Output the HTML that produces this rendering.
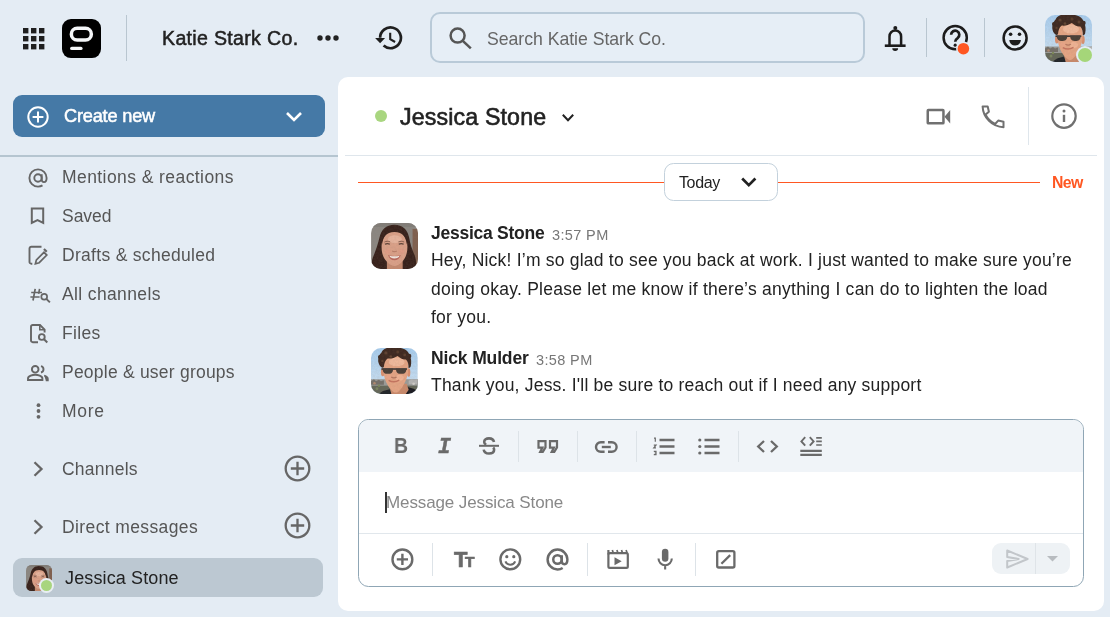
<!DOCTYPE html>
<html lang="en">
<head>
<meta charset="utf-8">
<title>Katie Stark Co.</title>
<style>
*{box-sizing:border-box;margin:0;padding:0}
html,body{width:1110px;height:617px;overflow:hidden}
body{background:#e4ecf4;font-family:"Liberation Sans",Arial,sans-serif;color:#222;position:relative}
.abs{position:absolute}
svg{position:absolute;overflow:visible}
.t{position:absolute;white-space:nowrap;line-height:1;will-change:transform}
/* top bar */
.vdiv{position:absolute;width:1px;background:#b9c6d0}
#search{position:absolute;left:430px;top:12px;width:435px;height:51px;border:2px solid #b9cad8;border-radius:10px;background:#e6eef6}
/* sidebar */
#create{position:absolute;left:13px;top:95.400px;width:312px;height:42px;border-radius:9px;background:#4579a6}
.nav{color:#555;font-size:17.5px}
#selrow{position:absolute;left:13px;top:558.200px;width:309.600px;height:39.200px;border-radius:9px;background:#bcc8d2}
/* main */
#main{position:absolute;left:338.200px;top:77px;width:765.600px;height:533.600px;background:#fff;border-radius:10px}
#hdrline{position:absolute;left:345px;top:155px;width:752px;height:1px;background:#dfe6ec}
#sideline{position:absolute;left:0;top:155.200px;width:338px;height:1.500px;background:#b5c5d0}
#today{position:absolute;left:663.700px;top:162.800px;width:114.500px;height:38.600px;border:1.500px solid #c3d1dc;border-radius:9.500px;background:#fff}
#compose{position:absolute;left:357.800px;top:419.200px;width:726.200px;height:167.400px;border:1.400px solid #8fa6b5;border-radius:10.500px;background:#fff;overflow:hidden}
#ctool{position:absolute;left:0;top:0;width:100%;height:52.300px;background:#f0f4f8}
#cline{position:absolute;left:0;top:113px;width:100%;height:1px;background:#e1e7ec}
.msg{font-size:17.5px;color:#222}
.cdiv{position:absolute;width:1px;background:#dde3e8}
</style>
</head>
<body>

<!-- ===== TOP BAR ===== -->
<div id="topbar">
  <svg style="left:23px;top:27.800px" width="21.400" height="21.400" viewBox="0 0 21.400 21.400" fill="#1f1f1f">
    <rect x="0" y="0" width="5.400" height="5.400"/><rect x="8" y="0" width="5.400" height="5.400"/><rect x="16" y="0" width="5.400" height="5.400"/>
    <rect x="0" y="8" width="5.400" height="5.400"/><rect x="8" y="8" width="5.400" height="5.400"/><rect x="16" y="8" width="5.400" height="5.400"/>
    <rect x="0" y="16" width="5.400" height="5.400"/><rect x="8" y="16" width="5.400" height="5.400"/><rect x="16" y="16" width="5.400" height="5.400"/>
  </svg>
  <svg style="left:62.400px;top:18.500px" width="40" height="40" viewBox="0 0 40 40">
    <rect x="0" y="0" width="39" height="39.100" rx="9" fill="#000"/>
    <rect x="9.350" y="9.350" width="20" height="11.700" rx="5.850" fill="none" stroke="#f4f6f8" stroke-width="3.500"/>
    <rect x="8.100" y="27.700" width="12.500" height="3.400" rx="1.700" fill="#f4f6f8"/>
  </svg>
  <div class="vdiv" style="left:126px;top:15px;height:46px"></div>
  <div class="t" id="ws" style="left:162px;top:28.5px;font-size:19.600px;color:#222;font-weight:normal;-webkit-text-stroke:0.500px #222;letter-spacing:0.308px">Katie Stark Co.</div>
  <svg style="left:317px;top:35px" width="22" height="6" viewBox="0 0 22 6" fill="#222"><circle cx="3" cy="3" r="2.700"/><circle cx="11" cy="3" r="2.700"/><circle cx="19" cy="3" r="2.700"/></svg>
  <!-- history -->
  <svg id="hist" style="left:375px;top:24px" width="28" height="27" viewBox="0 0 28 27" fill="none" stroke="#1f1f1f" stroke-width="2.700">
    <path d="M5.100 13.850A10.400 10.400 0 1 1 8.570 21.600"/>
    <path d="M0.100 13.900h10l-5 5.300z" fill="#1f1f1f" stroke="none"/>
    <path d="M15.200 8.800v6.300l4.900 2.900" stroke-width="2.100"/>
  </svg>
  <div id="search"></div>
  <svg style="left:449px;top:27px" width="23" height="22" viewBox="0 0 23 22" fill="none" stroke="#555" stroke-width="2.5"><circle cx="8.6" cy="8.6" r="7"/><path d="M13.8 13.8l8 7.6"/></svg>
  <div class="t" id="stext" style="left:487px;top:30.5px;font-size:17.7px;color:#666;letter-spacing:-0.042px">Search Katie Stark Co.</div>
  <!-- bell -->
  <svg id="bell" style="left:885px;top:25px" width="22" height="26" viewBox="0 0 22 26" fill="none" stroke="#1c1c1c" stroke-width="2.5">
    <path d="M4.500 20.300V11.400a5.800 6 0 0 1 11.600 0v8.900"/>
    <path d="M-0.200 20.700h20.800" stroke-width="2.600"/>
    <circle cx="10.300" cy="2.900" r="2" fill="#1c1c1c" stroke="none"/>
    <path d="M7.300 23.300h5.800a2.900 2.600 0 0 1-5.800 0z" fill="#1c1c1c" stroke="none"/>
  </svg>
  <div class="vdiv" style="left:926px;top:18px;height:39px"></div>
  <!-- help -->
  <svg id="help" style="left:942px;top:24px" width="28" height="32" viewBox="0 0 28 32" fill="none" stroke="#1c1c1c" stroke-width="2.500">
    <circle cx="13.200" cy="13.700" r="11.600"/>
    <path d="M9.100 10.700a4.100 4.100 0 1 1 6.500 3.400c-1.600 1.100-2.400 1.900-2.400 3.700" stroke-width="2.700"/>
    <circle cx="13.200" cy="21.200" r="1.600" fill="#1c1c1c" stroke="none"/>
    <circle cx="21.400" cy="24.700" r="7.300" fill="#e4ecf4" stroke="none"/>
    <circle cx="21.400" cy="24.700" r="5.800" fill="#ff5722" stroke="none"/>
  </svg>
  <div class="vdiv" style="left:984px;top:18px;height:39px"></div>
  <!-- smiley -->
  <svg id="smile" style="left:1002px;top:24px" width="27" height="27" viewBox="0 0 27 27" fill="none" stroke="#1c1c1c" stroke-width="2.500">
    <circle cx="13.100" cy="13.900" r="11.500"/>
    <circle cx="8.600" cy="10.300" r="1.800" fill="#1c1c1c" stroke="none"/>
    <circle cx="17.500" cy="10.300" r="1.800" fill="#1c1c1c" stroke="none"/>
    <path d="M7.300 16.100h11.600a5.800 5.400 0 0 1-11.600 0z" fill="#1c1c1c" stroke="none"/>
  </svg>
  <!-- user avatar placeholder -->
  <!--uav--><svg class="av" viewBox="0 0 47 47" width="47" height="47" style="left:1045px;top:14.6px;border-radius:10px;overflow:hidden">
  <defs>
    <linearGradient id="skyu" x1="0" y1="0" x2="0" y2="1"><stop offset="0" stop-color="#a6cbec"/><stop offset="0.7" stop-color="#c4dbef"/></linearGradient>
    <filter id="blu" x="-10%" y="-10%" width="120%" height="120%"><feGaussianBlur stdDeviation="0.6"/></filter>
    <filter id="nzu" x="0" y="0" width="100%" height="100%"><feTurbulence type="fractalNoise" baseFrequency="0.45" numOctaves="2" seed="7" result="n"/><feColorMatrix in="n" type="matrix" values="0 0 0 0 0.25  0 0 0 0 0.18  0 0 0 0 0.12  1.4 0 0 0 -0.45"/></filter>
  </defs>
  <rect width="47" height="47" fill="url(#skyu)"/>
  <g filter="url(#blu)">
    <!-- landscape -->
    <rect x="-2" y="31.500" width="51" height="8" fill="#9a9b98"/>
    <rect x="-2" y="38" width="51" height="12" fill="#65675a"/>
    <path d="M0 33.500l3-2 2 2 3-1.500 2 1.500 3-1v4.500h-13z" fill="#74706a"/>
    <path d="M38 33l3-1.500 3 1 3-1v5h-9z" fill="#b4b3b2"/>
    <circle cx="3.500" cy="35.500" r="1.300" fill="#b08a70"/><circle cx="8" cy="38" r="1.200" fill="#7c8a5a"/><circle cx="43" cy="36" r="1.300" fill="#d4d2ce"/><circle cx="6" cy="41" r="1.500" fill="#7a8560"/>
    <!-- shirt -->
    <path d="M30 41l6-2 7 2 5 3v4h-20z" fill="#1d1d20"/>
    <path d="M7 47l5-3.500 7-2 2 6z" fill="#24252a"/>
    <!-- neck -->
    <path d="M18 36h18l2 6-4 6h-13z" fill="#c98a6c"/>
    <!-- ears -->
    <ellipse cx="11.800" cy="24.500" rx="1.800" ry="4" fill="#d99070"/>
    <ellipse cx="38" cy="24.800" rx="1.700" ry="4.300" fill="#d99070"/>
    <!-- face -->
    <path d="M12.300 18c0-8 5-11.500 12.800-11.500s12.700 3.500 12.700 11.500c0 6-.8 11-3.300 16-2.500 5-6 11-9.400 11s-7.400-5.500-9.800-10.500c-2.200-4.500-3-10-3-16.500z" fill="#e3a484"/>
    <ellipse cx="26" cy="14" rx="8" ry="4.500" fill="#efb99c"/>
    <ellipse cx="29" cy="30" rx="4" ry="3" fill="#eeb294"/>
    <ellipse cx="18" cy="29.500" rx="3" ry="2.600" fill="#e8a588"/>
    <!-- hair -->
    <path d="M7.600 15c-1-4 .5-8 3-10.500 1-3 5-5 8-4.800 3-.9 8-.9 11 .3 4 .3 8 3 9 6.500 2 3 2.500 8 1.500 12-.6 1.500-1.500 2-2.300 1.500.3-3-.5-6.500-2.500-8.500-3 .5-6-1.500-8.500-3.500-3 2-7 3-10 2.500-2.500 1.500-3.500 5-3.800 8.500-.6 1-1.600 1.200-2.600.5-1.400-1.200-2.300-2.500-2.800-4.500z" fill="#3f2c22"/>
    <circle cx="9" cy="9" r="2" fill="#3f2c22"/><circle cx="38.500" cy="8" r="2.200" fill="#3f2c22"/><circle cx="24" cy="1.500" r="3" fill="#3f2c22"/>
    <circle cx="15" cy="5" r="1.600" fill="#5e4030"/><circle cx="27" cy="4" r="1.500" fill="#5a3d2e"/><circle cx="34" cy="7" r="1.400" fill="#5e4030"/><circle cx="20" cy="8.500" r="1.300" fill="#654636"/><circle cx="11.500" cy="13" r="1.200" fill="#5a3d2e"/>
    <!-- sunglasses -->
    <path d="M10.500 20.400h25.800v1.600h-25.800z" fill="#3a3634"/>
    <path d="M11.800 20.600h10.400c.3 3-.8 5.400-4.400 5.400h-1.800c-3 0-4.400-2.400-4.200-5.400z" fill="#4c3f39"/>
    <path d="M25.200 20.600h10.400c.3 3-1 5.400-4.200 5.400h-1.800c-3.400 0-4.600-2.400-4.400-5.400z" fill="#4c3f39"/>
    <!-- nose + mouth -->
    <path d="M20.400 29.200c1.500 1 4 1 5.400 0" stroke="#b47860" stroke-width="1.300" fill="none"/>
    <path d="M17.800 32.600c3 1.700 7.500 1.700 10.700-.2" stroke="#c47460" stroke-width="1.400" fill="none"/>
  </g>
  <rect width="47" height="47" filter="url(#nzu)" opacity="0.130"/>
</svg>
<!--/uav-->
  <div class="abs" style="left:1076px;top:46px;width:18px;height:18px;border-radius:50%;background:#e4ecf4"></div>
  <div class="abs" style="left:1078px;top:48px;width:14px;height:14px;border-radius:50%;background:#a5d679"></div>
</div>

<!-- ===== SIDEBAR ===== -->
<div id="sidebar">
  <div id="create"></div>
  <svg style="left:27px;top:105.5px" width="22" height="22" viewBox="0 0 22 22" fill="none" stroke="#fff" stroke-width="2"><circle cx="11" cy="11" r="9.7"/><path d="M11 5.6v10.8M5.6 11h10.8"/></svg>
  <div class="t" id="cn" style="left:64px;top:107.1px;font-size:18.2px;color:#fff;font-weight:normal;-webkit-text-stroke:0.500px #fff;letter-spacing:-0.202px">Create new</div>
  <svg style="left:286px;top:112px" width="16" height="10" viewBox="0 0 16 10" fill="none" stroke="#fff" stroke-width="2.6"><path d="M1 1l7 7 7-7"/></svg>
  <div id="sideline"></div>
  <!-- nav icons -->
  <!-- mentions @ -->
  <svg id="i-at" style="left:28px;top:167.5px" width="20" height="20" viewBox="0 0 20 20" fill="none" stroke="#666" stroke-width="1.9">
    <circle cx="10" cy="10" r="3.7"/>
    <path d="M13.7 6.2v5.4c0 1.6 1 2.5 2.3 2.5 1.5 0 2.6-1.4 2.6-4.1a8.6 8.6 0 1 0-8.6 8.6c1.600 0 3.200-.4 4.500-1.200"/>
  </svg>
  <!-- saved bookmark -->
  <svg id="i-bm" style="left:30px;top:207px" width="15" height="18" viewBox="0 0 15 18" fill="none" stroke="#666" stroke-width="2"><path d="M1.800 1.400h11.400v14.600l-5.700-2.800-5.700 2.800z"/></svg>
  <!-- drafts -->
  <svg id="i-dr" style="left:28px;top:245px" width="20" height="21" viewBox="0 0 20 21" fill="none" stroke="#666" stroke-width="1.900">
    <path d="M13.500 1.700h-10.200a1.800 1.800 0 0 0-1.800 1.800v13.400a1.800 1.800 0 0 0 1.800 1.800h1"/>
    <path d="M7.400 18.700l1-3.800 7.600-7.600 2.800 2.800-7.600 7.600z" stroke-width="1.700"/>
    <path d="M15.200 4.800l1.500-1.500 2.800 2.800-1.500 1.500z" fill="#666" stroke="none"/>
  </svg>
  <!-- all channels #q -->
  <svg id="i-ch" style="left:30px;top:288px" width="21" height="15" viewBox="0 0 21 15" fill="none" stroke="#666" stroke-width="1.700">
    <path d="M1.200 4.500h10.800M0.400 9h9.200M5.200 0.800l-2.200 11.700M9.600 0.800l-1 5"/>
    <circle cx="14.200" cy="8.700" r="2.900"/>
    <path d="M16.300 10.900l3.600 3.500" stroke-width="2"/>
  </svg>
  <!-- files -->
  <svg id="i-fi" style="left:30px;top:323.500px" width="19" height="20" viewBox="0 0 19 20" fill="none" stroke="#666" stroke-width="1.900">
    <path d="M8 18.200h-5.300a1.700 1.700 0 0 1-1.700-1.700v-13.800a1.700 1.700 0 0 1 1.700-1.700h7.300l4.600 4.600v2.800"/>
    <path d="M9.800 1.300v4.500h4.500" stroke-width="1.600"/>
    <circle cx="11.800" cy="13" r="2.900"/>
    <path d="M14 15.200l3.300 3.300" stroke-width="2"/>
  </svg>
  <!-- people -->
  <svg id="i-pe" style="left:27px;top:364.500px" width="22" height="16" viewBox="0 0 22 16" fill="none" stroke="#666" stroke-width="1.900">
    <circle cx="8.200" cy="4.300" r="3.300"/>
    <path d="M1 15v-1.500c0-2.600 4.800-3.700 7.200-3.700s7.200 1.100 7.200 3.700v1.500z"/>
    <path d="M14 1.100a3.300 3.300 0 0 1 0 6.400" />
    <path d="M17.200 10.500c2 .7 3.800 1.800 3.800 3.300v1.800h-2.200" fill="#666" stroke-width="1.400"/>
  </svg>
  <!-- more -->
  <svg id="i-mo" style="left:35.500px;top:403px" width="5" height="16" viewBox="0 0 5 16" fill="#666"><circle cx="2.500" cy="2.200" r="1.900"/><circle cx="2.500" cy="8" r="1.900"/><circle cx="2.500" cy="13.800" r="1.900"/></svg>

  <div class="t nav" id="n1" style="left:62px;top:169px;letter-spacing:0.424px">Mentions &amp; reactions</div>
  <div class="t nav" id="n2" style="left:62px;top:208px;letter-spacing:-0.045px">Saved</div>
  <div class="t nav" id="n3" style="left:62px;top:247px;letter-spacing:0.302px">Drafts &amp; scheduled</div>
  <div class="t nav" id="n4" style="left:62px;top:286px;letter-spacing:0.369px">All channels</div>
  <div class="t nav" id="n5" style="left:62px;top:325px;letter-spacing:0.309px">Files</div>
  <div class="t nav" id="n6" style="left:62px;top:364px;letter-spacing:0.224px">People &amp; user groups</div>
  <div class="t nav" id="n7" style="left:62px;top:403px;letter-spacing:0.681px">More</div>

  <!-- sections -->
  <svg style="left:33px;top:461px" width="11" height="16" viewBox="0 0 11 16" fill="none" stroke="#666" stroke-width="2.300"><path d="M1.500 1.200l7 6.800-7 6.800"/></svg>
  <div class="t nav" id="nc" style="left:62px;top:461px;letter-spacing:0.231px">Channels</div>
  <svg style="left:283.900px;top:454.800px" width="27" height="27" viewBox="0 0 27 27" fill="none" stroke="#666" stroke-width="2.300"><circle cx="13.500" cy="13.500" r="11.800"/><path d="M13.500 6.800v13.400M6.800 13.500h13.400"/></svg>
  <svg style="left:33px;top:518.500px" width="11" height="16" viewBox="0 0 11 16" fill="none" stroke="#666" stroke-width="2.300"><path d="M1.500 1.200l7 6.800-7 6.800"/></svg>
  <div class="t nav" id="nd" style="left:62px;top:518.5px;letter-spacing:0.385px">Direct messages</div>
  <svg style="left:283.900px;top:512.400px" width="27" height="27" viewBox="0 0 27 27" fill="none" stroke="#666" stroke-width="2.300"><circle cx="13.500" cy="13.500" r="11.800"/><path d="M13.500 6.800v13.400M6.800 13.500h13.400"/></svg>

  <div id="selrow"></div>
  <!--javs--><svg class="av" viewBox="0 0 47 47" width="26" height="26" style="left:26px;top:565px;border-radius:5.5px;overflow:hidden">
  <defs>
    <filter id="bls" x="-10%" y="-10%" width="120%" height="120%"><feGaussianBlur stdDeviation="0.65"/></filter>
    <filter id="nzs" x="0" y="0" width="100%" height="100%"><feTurbulence type="fractalNoise" baseFrequency="0.5" numOctaves="2" seed="3" result="n"/><feColorMatrix in="n" type="matrix" values="0 0 0 0 0.3  0 0 0 0 0.2  0 0 0 0 0.15  1.4 0 0 0 -0.45"/></filter>
  </defs>
  <rect width="47" height="47" fill="#8b8782"/>
  <g filter="url(#bls)">
    <rect x="42" y="6" width="7" height="43" fill="#7f6050"/>
    <rect x="-2" y="-2" width="51" height="6" fill="#827e79"/>
    <!-- hair -->
    <path d="M23.500 1.800c8.500 0 13.500 5 15 13 1.200 7 3 12 5.500 17.500 1.500 4 2 9 1.500 15h-44.500c-1.500-6 0-11 2-15.500 2.500-6 4-11 5.500-17 1.800-8 6.500-13 15-13z" fill="#38241d"/>
    <!-- neck -->
    <path d="M16 38h16v10h-16z" fill="#c48a70"/>
    <!-- face -->
    <path d="M10.600 24c0-9 4.900-14.800 13.100-14.800s13.100 5.800 13.100 14.800c0 6-1.500 10.500-4.300 14-2.700 3.500-5.800 5.500-8.800 5.500s-6.100-2-8.800-5.500c-2.800-3.500-4.300-8-4.300-14z" fill="#d9a088"/>
    <ellipse cx="24" cy="16.500" rx="7" ry="4" fill="#e5b39d"/>
    <ellipse cx="17" cy="29" rx="3" ry="2.600" fill="#de9c86"/>
    <ellipse cx="30.500" cy="29" rx="3" ry="2.600" fill="#de9c86"/>
    <!-- hair parting sides -->
    <path d="M23.500 6c-6 1-11 6-12.500 16-.8-7 1-14 6.500-17.500z" fill="#38241d"/>
    <path d="M23.500 6c6 1 11.500 6 12.800 16 .8-7-1-14-6.500-17.500z" fill="#38241d"/>
    <!-- eyes/brows -->
    <path d="M14 21.600c1.500-.9 3.500-.9 5 0M28 21.600c1.500-.9 3.500-.9 5 0" stroke="#5a4036" stroke-width="1.300" fill="none"/>
    <path d="M13.500 19.300c1.700-1 4-1 5.800-.2M27.700 19.100c1.800-.8 4-.8 5.800.2" stroke="#7a5546" stroke-width="0.900" fill="none"/>
    <!-- nose -->
    <path d="M21.300 28.400c1.500.8 3.400.8 4.800 0" stroke="#b97f6a" stroke-width="1.200" fill="none"/>
    <!-- smile -->
    <path d="M17.100 32.500c4 1.200 9 1.200 13 0-1 3.600-3.600 5.300-6.500 5.300s-5.500-1.700-6.500-5.300z" fill="#b9685c"/>
    <path d="M18.500 33.200c3.400.8 7 .8 10.300 0-.6 1.800-2.600 2.800-5.100 2.800s-4.500-1-5.200-2.800z" fill="#f1e6de"/>
  </g>
  <rect width="47" height="47" filter="url(#nzs)" opacity="0.160"/>
</svg>
<!--/javs-->
  <div class="abs" style="left:38.900px;top:577.800px;width:15.200px;height:15.200px;border-radius:50%;background:#e9eef3"></div>
  <div class="abs" style="left:40.700px;top:579.600px;width:11.600px;height:11.600px;border-radius:50%;background:#a8d57e"></div>
  <div class="t" id="js-side" style="left:65px;top:568.500px;font-size:18px;color:#222;letter-spacing:0.126px">Jessica Stone</div>
</div>

<!-- ===== MAIN ===== -->
<div id="main"></div>
<div id="hdrline"></div>
<!-- header -->
<div class="abs" style="left:375.200px;top:110.400px;width:12px;height:12px;border-radius:50%;background:#a9d680"></div>
<div class="t" id="hname" style="left:400px;top:106px;font-size:23.200px;color:#222;-webkit-text-stroke:0.600px #222;letter-spacing:0.142px">Jessica Stone</div>
<svg style="left:561.500px;top:114px" width="12" height="8" viewBox="0 0 12 8" fill="none" stroke="#222" stroke-width="2"><path d="M0.800 0.800l5.200 5.400 5.200-5.400"/></svg>
<!-- video -->
<svg id="i-vid" style="left:926px;top:108.500px" width="25" height="16" viewBox="0 0 25 16" fill="none" stroke="#707070" stroke-width="2.500">
  <rect x="1.750" y="1.050" width="15.700" height="13.200" rx="0.600"/>
  <path d="M18.500 7.700l5.700-6.800v13.700z" fill="#707070" stroke="none"/>
</svg>
<!-- phone -->
<svg id="i-ph" style="left:981px;top:104.500px" width="24" height="24" viewBox="0 0 24 24" fill="none" stroke="#707070" stroke-width="2" stroke-linejoin="round">
  <path d="M1.600 1.500h5.100l1.200 5.200-3.300 2.900c1.900 3.800 5.200 7.200 9.500 9.400l3.100-3.400 5.300 1.100v5.500c-11.400-.4-20.400-9.500-20.900-20.700z"/>
</svg>
<div class="abs" style="left:1028px;top:87px;width:1px;height:58px;background:#dfe6ec"></div>
<!-- info -->
<svg id="i-info" style="left:1051.200px;top:103px" width="26" height="26" viewBox="0 0 26 26" fill="none" stroke="#707070" stroke-width="2.200">
  <circle cx="13" cy="13.100" r="11.700"/>
  <path d="M13 11.800v7.200" stroke-width="2.400"/>
  <circle cx="13" cy="8" r="1.500" fill="#707070" stroke="none"/>
</svg>

<!-- date separator -->
<div class="abs" style="left:358px;top:181.600px;width:682px;height:1.400px;background:#ff5722"></div>
<div id="today"></div>
<div class="t" id="todaytx" style="left:679px;top:174.500px;font-size:16px;color:#222;letter-spacing:-0.381px">Today</div>
<svg style="left:740.700px;top:176.800px" width="16" height="11" viewBox="0 0 16 11" fill="none" stroke="#222" stroke-width="2.700"><path d="M1.200 1.500l6.600 6.600 6.600-6.600"/></svg>
<div class="t" id="newtx" style="left:1052.300px;top:175px;font-size:15.800px;font-weight:bold;color:#ff5722;letter-spacing:-0.595px">New</div>

<!-- message 1 -->
<!--jav--><svg class="av" viewBox="0 0 47 47" width="46.6" height="46.4" style="left:371px;top:222.7px;border-radius:10px;overflow:hidden">
  <defs>
    <filter id="blj" x="-10%" y="-10%" width="120%" height="120%"><feGaussianBlur stdDeviation="0.65"/></filter>
    <filter id="nzj" x="0" y="0" width="100%" height="100%"><feTurbulence type="fractalNoise" baseFrequency="0.5" numOctaves="2" seed="3" result="n"/><feColorMatrix in="n" type="matrix" values="0 0 0 0 0.3  0 0 0 0 0.2  0 0 0 0 0.15  1.4 0 0 0 -0.45"/></filter>
  </defs>
  <rect width="47" height="47" fill="#8b8782"/>
  <g filter="url(#blj)">
    <rect x="42" y="6" width="7" height="43" fill="#7f6050"/>
    <rect x="-2" y="-2" width="51" height="6" fill="#827e79"/>
    <!-- hair -->
    <path d="M23.500 1.800c8.500 0 13.500 5 15 13 1.200 7 3 12 5.500 17.500 1.500 4 2 9 1.500 15h-44.500c-1.500-6 0-11 2-15.500 2.500-6 4-11 5.500-17 1.800-8 6.500-13 15-13z" fill="#38241d"/>
    <!-- neck -->
    <path d="M16 38h16v10h-16z" fill="#c48a70"/>
    <!-- face -->
    <path d="M10.600 24c0-9 4.900-14.800 13.100-14.800s13.100 5.800 13.100 14.800c0 6-1.500 10.500-4.300 14-2.700 3.500-5.800 5.500-8.800 5.500s-6.100-2-8.800-5.500c-2.800-3.500-4.300-8-4.300-14z" fill="#d9a088"/>
    <ellipse cx="24" cy="16.500" rx="7" ry="4" fill="#e5b39d"/>
    <ellipse cx="17" cy="29" rx="3" ry="2.600" fill="#de9c86"/>
    <ellipse cx="30.500" cy="29" rx="3" ry="2.600" fill="#de9c86"/>
    <!-- hair parting sides -->
    <path d="M23.500 6c-6 1-11 6-12.500 16-.8-7 1-14 6.500-17.500z" fill="#38241d"/>
    <path d="M23.500 6c6 1 11.500 6 12.800 16 .8-7-1-14-6.500-17.500z" fill="#38241d"/>
    <!-- eyes/brows -->
    <path d="M14 21.600c1.500-.9 3.500-.9 5 0M28 21.600c1.500-.9 3.500-.9 5 0" stroke="#5a4036" stroke-width="1.300" fill="none"/>
    <path d="M13.500 19.300c1.700-1 4-1 5.800-.2M27.700 19.100c1.800-.8 4-.8 5.800.2" stroke="#7a5546" stroke-width="0.900" fill="none"/>
    <!-- nose -->
    <path d="M21.300 28.400c1.500.8 3.400.8 4.800 0" stroke="#b97f6a" stroke-width="1.200" fill="none"/>
    <!-- smile -->
    <path d="M17.100 32.500c4 1.200 9 1.200 13 0-1 3.600-3.600 5.300-6.500 5.300s-5.500-1.700-6.500-5.300z" fill="#b9685c"/>
    <path d="M18.500 33.200c3.400.8 7 .8 10.300 0-.6 1.800-2.600 2.800-5.100 2.800s-4.500-1-5.200-2.800z" fill="#f1e6de"/>
  </g>
  <rect width="47" height="47" filter="url(#nzj)" opacity="0.160"/>
</svg>
<!--/jav-->
<div class="t" id="m1n" style="left:431px;top:225px;font-size:17.5px;font-weight:bold;color:#222;letter-spacing:-0.256px">Jessica Stone</div>
<div class="t" id="m1t" style="left:552px;top:227.500px;font-size:14.5px;color:#777;letter-spacing:0.371px">3:57 PM</div>
<div class="t msg" id="m1a" style="left:431px;top:252px;letter-spacing:0.22px">Hey, Nick! I’m so glad to see you back at work. I just wanted to make sure you’re</div>
<div class="t msg" id="m1b" style="left:431px;top:280.500px;letter-spacing:0.255px">doing okay. Please let me know if there’s anything I can do to lighten the load</div>
<div class="t msg" id="m1c" style="left:431px;top:309px;letter-spacing:0.253px">for you.</div>

<!-- message 2 -->
<!--nav2--><svg class="av" viewBox="0 0 47 47" width="46.6" height="46.6" style="left:371px;top:347.5px;border-radius:10px;overflow:hidden">
  <defs>
    <linearGradient id="skyn" x1="0" y1="0" x2="0" y2="1"><stop offset="0" stop-color="#a6cbec"/><stop offset="0.7" stop-color="#c4dbef"/></linearGradient>
    <filter id="bln" x="-10%" y="-10%" width="120%" height="120%"><feGaussianBlur stdDeviation="0.6"/></filter>
    <filter id="nzn" x="0" y="0" width="100%" height="100%"><feTurbulence type="fractalNoise" baseFrequency="0.45" numOctaves="2" seed="7" result="n"/><feColorMatrix in="n" type="matrix" values="0 0 0 0 0.25  0 0 0 0 0.18  0 0 0 0 0.12  1.4 0 0 0 -0.45"/></filter>
  </defs>
  <rect width="47" height="47" fill="url(#skyn)"/>
  <g filter="url(#bln)">
    <!-- landscape -->
    <rect x="-2" y="31.500" width="51" height="8" fill="#9a9b98"/>
    <rect x="-2" y="38" width="51" height="12" fill="#65675a"/>
    <path d="M0 33.500l3-2 2 2 3-1.500 2 1.500 3-1v4.500h-13z" fill="#74706a"/>
    <path d="M38 33l3-1.500 3 1 3-1v5h-9z" fill="#b4b3b2"/>
    <circle cx="3.500" cy="35.500" r="1.300" fill="#b08a70"/><circle cx="8" cy="38" r="1.200" fill="#7c8a5a"/><circle cx="43" cy="36" r="1.300" fill="#d4d2ce"/><circle cx="6" cy="41" r="1.500" fill="#7a8560"/>
    <!-- shirt -->
    <path d="M30 41l6-2 7 2 5 3v4h-20z" fill="#1d1d20"/>
    <path d="M7 47l5-3.500 7-2 2 6z" fill="#24252a"/>
    <!-- neck -->
    <path d="M18 36h18l2 6-4 6h-13z" fill="#c98a6c"/>
    <!-- ears -->
    <ellipse cx="11.800" cy="24.500" rx="1.800" ry="4" fill="#d99070"/>
    <ellipse cx="38" cy="24.800" rx="1.700" ry="4.300" fill="#d99070"/>
    <!-- face -->
    <path d="M12.300 18c0-8 5-11.500 12.800-11.500s12.700 3.500 12.700 11.500c0 6-.8 11-3.300 16-2.500 5-6 11-9.400 11s-7.400-5.500-9.800-10.500c-2.200-4.500-3-10-3-16.500z" fill="#e3a484"/>
    <ellipse cx="26" cy="14" rx="8" ry="4.500" fill="#efb99c"/>
    <ellipse cx="29" cy="30" rx="4" ry="3" fill="#eeb294"/>
    <ellipse cx="18" cy="29.500" rx="3" ry="2.600" fill="#e8a588"/>
    <!-- hair -->
    <path d="M7.600 15c-1-4 .5-8 3-10.500 1-3 5-5 8-4.800 3-.9 8-.9 11 .3 4 .3 8 3 9 6.500 2 3 2.500 8 1.500 12-.6 1.500-1.500 2-2.300 1.500.3-3-.5-6.500-2.500-8.500-3 .5-6-1.500-8.500-3.500-3 2-7 3-10 2.500-2.500 1.500-3.500 5-3.800 8.500-.6 1-1.600 1.200-2.600.5-1.400-1.200-2.300-2.500-2.800-4.500z" fill="#3f2c22"/>
    <circle cx="9" cy="9" r="2" fill="#3f2c22"/><circle cx="38.500" cy="8" r="2.200" fill="#3f2c22"/><circle cx="24" cy="1.500" r="3" fill="#3f2c22"/>
    <circle cx="15" cy="5" r="1.600" fill="#5e4030"/><circle cx="27" cy="4" r="1.500" fill="#5a3d2e"/><circle cx="34" cy="7" r="1.400" fill="#5e4030"/><circle cx="20" cy="8.500" r="1.300" fill="#654636"/><circle cx="11.500" cy="13" r="1.200" fill="#5a3d2e"/>
    <!-- sunglasses -->
    <path d="M10.500 20.400h25.800v1.600h-25.800z" fill="#3a3634"/>
    <path d="M11.800 20.600h10.400c.3 3-.8 5.400-4.400 5.400h-1.800c-3 0-4.400-2.400-4.200-5.400z" fill="#4c3f39"/>
    <path d="M25.200 20.600h10.400c.3 3-1 5.400-4.200 5.400h-1.800c-3.400 0-4.600-2.400-4.400-5.400z" fill="#4c3f39"/>
    <!-- nose + mouth -->
    <path d="M20.400 29.200c1.500 1 4 1 5.400 0" stroke="#b47860" stroke-width="1.300" fill="none"/>
    <path d="M17.800 32.600c3 1.700 7.500 1.700 10.700-.2" stroke="#c47460" stroke-width="1.400" fill="none"/>
  </g>
  <rect width="47" height="47" filter="url(#nzn)" opacity="0.130"/>
</svg>
<!--/nav2-->
<div class="t" id="m2n" style="left:431px;top:350.2px;font-size:17.5px;font-weight:bold;color:#222;letter-spacing:-0.137px">Nick Mulder</div>
<div class="t" id="m2t" style="left:536px;top:352.7px;font-size:14.5px;color:#777;letter-spacing:0.371px">3:58 PM</div>
<div class="t msg" id="m2a" style="left:431px;top:377.3px;letter-spacing:0.209px">Thank you, Jess. I'll be sure to reach out if I need any support</div>

<!-- compose -->
<div id="compose">
  <div id="ctool"></div>
  <div id="cline"></div>
</div>
<!-- toolbar top : center y = 446 -->
<div class="t" id="tb-b" style="left:393.800px;top:434.900px;font-size:22.500px;font-weight:bold;color:#6a6a6a;transform:scaleX(0.86);transform-origin:0 0">B</div>
<div class="t" id="tb-i" style="left:438.300px;top:436.700px;-webkit-text-stroke:0.500px #6a6a6a;font-size:21.500px;font-weight:bold;font-style:italic;font-family:'Liberation Mono',monospace;color:#6a6a6a">I</div>
<svg id="tb-s" style="left:479px;top:437px" width="20" height="18" viewBox="0 0 20 18" fill="none" stroke="#6a6a6a" stroke-width="2.600">
  <path d="M15 5c-.4-2.300-2.300-3.600-5-3.600-2.800 0-4.800 1.400-4.800 3.600 0 1.200.7 2.200 2 2.800"/>
  <path d="M4.700 12.600c.4 2.500 2.500 3.900 5.300 3.900 3 0 5.100-1.400 5.100-3.800 0-.9-.3-1.600-.9-2.200"/>
  <path d="M0 8.800h20" stroke-width="2"/>
</svg>
<div class="cdiv" style="left:518px;top:431px;height:31px"></div>
<svg id="tb-q" style="left:537px;top:440px" width="22" height="13" viewBox="0 0 22 13" fill="none" stroke="#6a6a6a" stroke-width="2.200">
  <path d="M1.500 1.200h7v6.200l-2.700 4.500h-2.600l2.200-4.300h-3.900z"/>
  <path d="M13 1.200h7v6.200l-2.700 4.500h-2.600l2.200-4.300h-3.900z"/>
</svg>
<div class="cdiv" style="left:576.500px;top:431px;height:31px"></div>
<svg id="tb-l" style="left:594.500px;top:440.500px" width="23" height="12" viewBox="0 0 23 12" fill="none" stroke="#6a6a6a" stroke-width="2.400">
  <path d="M9.600 1.200h-3.800a4.800 4.800 0 0 0 0 9.600h3.800"/>
  <path d="M13 1.200h3.800a4.800 4.800 0 0 1 0 9.600h-3.800"/>
  <path d="M6.800 6h9"/>
</svg>
<div class="cdiv" style="left:635.500px;top:431px;height:31px"></div>
<svg id="tb-ol" style="left:653px;top:436.500px" width="22" height="19" viewBox="0 0 22 19" fill="none" stroke="#6a6a6a" stroke-width="2.300">
  <path d="M6.500 3h15M6.500 9.500h15M6.500 16h15"/>
  <path d="M1 1.200h1.300v3.600M0.800 8.200h2.200l-2.200 2.700h2.200M0.800 14.400h2.200v3.300h-2.200M1.600 16h1.400" stroke-width="1.200"/>
</svg>
<svg id="tb-ul" style="left:698px;top:437.500px" width="22" height="17" viewBox="0 0 22 17" fill="none" stroke="#6a6a6a" stroke-width="2.300">
  <path d="M6.500 2h15M6.500 8.500h15M6.500 15h15"/>
  <circle cx="1.800" cy="2" r="1.600" fill="#6a6a6a" stroke="none"/><circle cx="1.800" cy="8.500" r="1.600" fill="#6a6a6a" stroke="none"/><circle cx="1.800" cy="15" r="1.600" fill="#6a6a6a" stroke="none"/>
</svg>
<div class="cdiv" style="left:738px;top:431px;height:31px"></div>
<svg id="tb-c" style="left:756px;top:439.500px" width="23" height="13" viewBox="0 0 23 13" fill="none" stroke="#6a6a6a" stroke-width="2.300">
  <path d="M8 1l-5.800 5.500 5.800 5.500M15 1l5.800 5.500-5.800 5.500"/>
</svg>
<svg id="tb-cb" style="left:800px;top:435px" width="22" height="22" viewBox="0 0 22 22" fill="none" stroke="#6a6a6a" stroke-width="2">
  <path d="M5.200 2.200l-3.800 4.200 3.800 4.200M9.800 2.200l3.800 4.200-3.800 4.200" stroke-width="1.900"/>
  <path d="M16.200 2.800h5.600M16.200 6.400h5.600M16.200 10h5.600" stroke-width="1.700"/>
  <path d="M0.300 15.900h21.500M0.300 19.800h21.500" stroke-width="2.200"/>
</svg>

<!-- placeholder -->
<div class="abs" style="left:385px;top:492px;width:1.500px;height:21px;background:#333"></div>
<div class="t" id="ph" style="left:386px;top:493.500px;font-size:17px;color:#888;letter-spacing:-0.112px">Message Jessica Stone</div>

<!-- bottom toolbar : center y = 559 -->
<svg id="bb-plus" style="left:390.500px;top:548px" width="23" height="23" viewBox="0 0 23 23" fill="none" stroke="#6a6a6a" stroke-width="2.400"><circle cx="11.400" cy="11.400" r="9.900"/><path d="M11.400 5.800v11.200M5.800 11.400h11.200"/></svg>
<div class="cdiv" style="left:432px;top:543px;height:33px"></div>
<div class="t" id="bb-tt" style="left:453.600px;top:548.700px;font-size:22px;font-weight:bold;color:#6a6a6a;letter-spacing:-2.400px;-webkit-text-stroke:0.700px #6a6a6a">T<span style="font-size:15.500px">T</span></div>
<svg id="bb-sm" style="left:498.500px;top:548px" width="23" height="23" viewBox="0 0 23 23" fill="none" stroke="#6a6a6a" stroke-width="2.400">
  <circle cx="11.300" cy="11.300" r="9.900"/>
  <circle cx="7.800" cy="8.700" r="1.600" fill="#6a6a6a" stroke="none"/><circle cx="14.800" cy="8.700" r="1.600" fill="#6a6a6a" stroke="none"/>
  <path d="M6.400 13.400a5.300 5.300 0 0 0 9.800 0" stroke-width="2"/>
</svg>
<svg id="bb-at" style="left:545.500px;top:548px" width="23" height="23" viewBox="0 0 20 20" fill="none" stroke="#6a6a6a" stroke-width="2.150">
  <circle cx="10" cy="10" r="3.700"/>
  <path d="M13.700 6.200v5.400c0 1.600 1 2.500 2.300 2.500 1.500 0 2.600-1.400 2.600-4.100a8.600 8.600 0 1 0-8.600 8.600c1.600 0 3.200-.4 4.500-1.200"/>
</svg>
<div class="cdiv" style="left:587px;top:543px;height:33px"></div>
<svg id="bb-cl" style="left:607px;top:548px" width="23" height="23" viewBox="0 0 23 23" fill="none" stroke="#6a6a6a" stroke-width="2.200">
  <rect x="1.400" y="5.200" width="19.400" height="14.600" rx="1.400"/>
  <path d="M5.300 2l1 3M9.900 2l1 3M14.500 2l1 3M19.100 2l1 3" stroke-width="1.700"/>
  <path d="M1.400 6.500v-4.500" stroke-width="2.200"/>
  <path d="M7.500 9.200v8l7.200-4z" fill="#6a6a6a" stroke="none"/>
</svg>
<svg id="bb-mic" style="left:657px;top:548px" width="17" height="24" viewBox="0 0 17 24" fill="none" stroke="#6a6a6a" stroke-width="2.100">
  <rect x="4.900" y="0.800" width="6.500" height="13" rx="3.250" fill="#6a6a6a" stroke="none"/>
  <path d="M1.500 10.600a6.650 6.650 0 0 0 13.300 0M8.150 17.400v4"/>
</svg>
<div class="cdiv" style="left:695px;top:543px;height:33px"></div>
<svg id="bb-sl" style="left:716px;top:550.400px" width="20" height="19" viewBox="0 0 20 19" fill="none" stroke="#6a6a6a" stroke-width="2.300">
  <rect x="1.200" y="1.200" width="17.200" height="16.300" rx="1.600"/>
  <path d="M5.400 13.700l8.800-8.600"/>
</svg>
<!-- send -->
<div class="abs" style="left:991.500px;top:542.500px;width:78px;height:31px;border-radius:9px;background:#eef2f5"></div>
<div class="abs" style="left:1035px;top:542.500px;width:1px;height:31px;background:#dfe4e8"></div>
<svg id="bb-send" style="left:1006px;top:548.500px" width="23" height="20" viewBox="0 0 23 20" fill="none" stroke="#c2c6ca" stroke-width="2" stroke-linejoin="round">
  <path d="M1.200 1.500l20.400 8.500-20.400 8.500v-6.600l11.500-1.900-11.500-1.900z"/>
</svg>
<svg style="left:1047px;top:555.500px" width="11" height="6" viewBox="0 0 11 6" fill="#b8bcc0"><path d="M0 0h11l-5.500 5.600z"/></svg>

</body>
</html>
